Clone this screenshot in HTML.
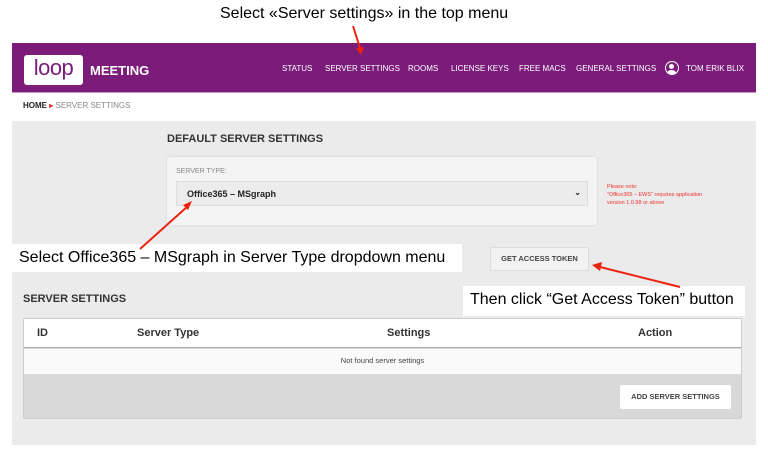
<!DOCTYPE html>
<html><head><meta charset="utf-8"><style>
*{margin:0;padding:0;box-sizing:border-box}
body{width:768px;height:451px;background:#fff;position:relative;font-family:"Liberation Sans",sans-serif;overflow:hidden}
.a{position:absolute}
.nav{font-size:8px;color:#fff;top:64px}
.cap{font-family:"Liberation Sans",sans-serif;font-size:16px;color:#000;background:#fff;white-space:nowrap}
</style></head><body>
<div class="a cap" style="left:220px;top:5px">Select «Server settings» in the top menu</div>
<div class="a" style="left:12px;top:43px;width:744px;height:50px;background:#7b1c7b;border-bottom:1px solid #c89ac8"></div>
<div class="a" style="left:24px;top:55px;width:59px;height:30px;background:#fff;border-radius:3px;color:#7b1c7b;font-size:22px;line-height:26px;text-align:center;letter-spacing:-0.5px">loop</div>
<div class="a" style="left:90px;top:63px;color:#fff;font-weight:bold;font-size:13px">MEETING</div>
<div class="a nav" style="left:282px">STATUS</div>
<div class="a nav" style="left:325px">SERVER SETTINGS</div>
<div class="a nav" style="left:408px">ROOMS</div>
<div class="a nav" style="left:451px">LICENSE KEYS</div>
<div class="a nav" style="left:519px">FREE MACS</div>
<div class="a nav" style="left:576px">GENERAL SETTINGS</div>
<div class="a" style="left:665px;top:61px;width:14px;height:14px;border:1.5px solid #fff;border-radius:50%;overflow:hidden"><div style="position:absolute;left:3px;top:2px;width:5px;height:5px;background:#fff;border-radius:50%"></div><div style="position:absolute;left:1px;top:8px;width:9px;height:6px;background:#fff;border-radius:50% 50% 0 0"></div></div>
<div class="a nav" style="left:686px">TOM ERIK BLIX</div>
<div class="a" style="left:23px;top:101px;font-size:8px;font-weight:bold;color:#222">HOME <span style="color:#e33">▸</span> <span style="color:#888;font-weight:normal">SERVER SETTINGS</span></div>
<div class="a" style="left:12px;top:121px;width:744px;height:324px;background:#ebebeb"></div>
<div class="a" style="left:167px;top:133px;font-size:11px;font-weight:bold;color:#333">DEFAULT SERVER SETTINGS</div>
<div class="a" style="left:167px;top:157px;width:430px;height:68px;background:#f4f4f4;border-radius:3px;box-shadow:0 0 2px #ccc"></div>
<div class="a" style="left:176px;top:168px;font-size:7px;color:#888">SERVER TYPE:</div>
<div class="a" style="left:176px;top:181px;width:412px;height:25px;background:#ececec;border:1px solid #ddd;font-size:9px;font-weight:bold;color:#222;padding:7px 10px">Office365 – MSgraph<span style="position:absolute;right:6px;top:6px;font-size:8px">⌄</span></div>
<div class="a" style="left:607px;top:183px;font-size:5.5px;color:#e33;line-height:8px">Please note:<br>"Office365 – EWS" requires application<br>version 1.0.98 or above</div>
<div class="a" style="left:490px;top:247px;width:99px;height:24px;background:#f2f2f2;border:1px solid #ddd;font-size:7.5px;font-weight:bold;color:#444;text-align:center;line-height:22px">GET ACCESS TOKEN</div>
<div class="a cap" style="left:12px;top:244px;width:450px;height:28px;padding:5px 7px">Select Office365 – MSgraph in Server Type dropdown menu</div>
<div class="a" style="left:23px;top:293px;font-size:11px;font-weight:bold;color:#333">SERVER SETTINGS</div>
<div class="a cap" style="left:463px;top:286px;width:282px;height:30px;padding:5px 7px">Then click “Get Access Token” button</div>
<div class="a" style="left:23px;top:318px;width:719px;height:101px;background:#d9d9d9;border:1px solid #ccc;border-radius:2px"></div>
<div class="a" style="left:24px;top:319px;width:717px;height:29px;background:#fff;border-bottom:1px solid #aaa;font-size:11px;font-weight:bold;color:#333">
<span class="a" style="left:13px;top:8px">ID</span><span class="a" style="left:113px;top:8px">Server Type</span><span class="a" style="left:363px;top:8px">Settings</span><span class="a" style="left:614px;top:8px">Action</span></div>
<div class="a" style="left:24px;top:349px;width:717px;height:25px;background:#fafafa;text-align:center;font-size:7.5px;color:#444;line-height:24px">Not found server settings</div>
<div class="a" style="left:620px;top:385px;width:111px;height:24px;background:#fff;border-radius:2px;font-size:7.5px;font-weight:bold;color:#444;text-align:center;line-height:24px">ADD SERVER SETTINGS</div>
<svg class="a" style="left:0;top:0" width="768" height="451">
<g stroke="#e21" stroke-width="2" fill="#e21">
<line x1="353" y1="26" x2="360" y2="48"/><polygon points="356,48 364,47 361,55" stroke="none"/>
<line x1="140" y1="249" x2="188" y2="206"/><polygon points="183,205 192,201 188,210" stroke="none"/>
<line x1="680" y1="287" x2="600" y2="267"/><polygon points="602,262 592,265 600,271" stroke="none"/>
</g></svg>
</body></html>
